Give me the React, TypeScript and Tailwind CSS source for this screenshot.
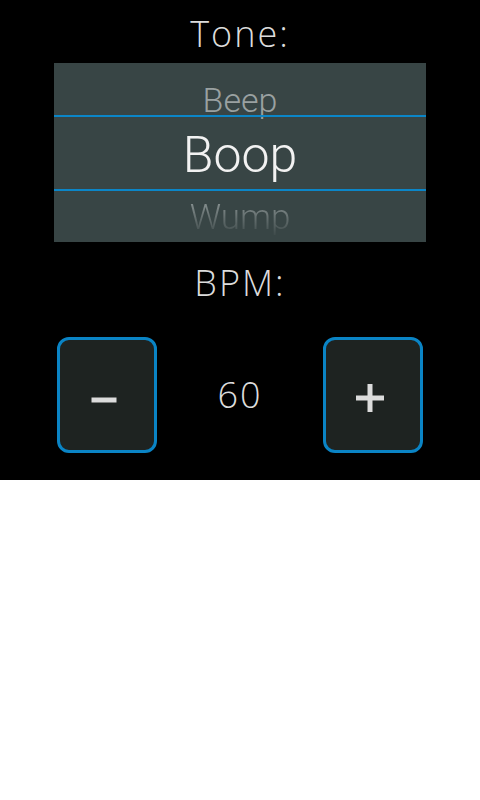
import React from 'react';

const label = "font-['Open_Sans',sans-serif] font-[350] text-[36px] leading-none text-[#dcdcdc] tracking-[2px]";

function StepButton({ kind }: { kind: 'minus' | 'plus' }) {
  return (
    <button className="w-[100px] h-[116px] rounded-[12px] border-[3px] border-[#0a84c5] bg-[#1e2321] flex items-center justify-center">
      {kind === 'minus' ? (
        <svg width="26" height="26" viewBox="0 0 26 26" className="mt-[10px] mr-[6px]">
          <rect x="0.5" y="10.5" width="25" height="5" fill="#dcdcdc" />
        </svg>
      ) : (
        <svg width="28" height="28" viewBox="0 0 28 28" className="mt-[6px] mr-[6px]">
          <rect x="0" y="11.5" width="28" height="5" fill="#dcdcdc" />
          <rect x="11.5" y="0" width="5" height="28" fill="#dcdcdc" />
        </svg>
      )}
    </button>
  );
}

function App() {
  return (
    <div className="w-[480px] min-h-[800px] bg-white">
      <div className="h-[480px] bg-black flex flex-col items-center pt-[16px]">
        <div className={label}>Tone:</div>

        {/* tone picker */}
        <div className="relative mt-[11px] w-[372px] h-[179px] bg-[#384545] overflow-hidden flex flex-col items-center font-['Roboto',sans-serif] font-light">
          <div className="mt-[20px] text-[34px] leading-none text-[#9aa1a1]">Beep</div>
          <div className="mt-[13px] text-[50px] leading-none text-[#f2f2f2]">Boop</div>
          <div className="mt-[20px] text-[35px] leading-none text-transparent bg-clip-text bg-gradient-to-b from-[#8c9595] to-[#3f4b4b]">Wump</div>
          <div className="absolute left-0 right-0 top-[52px] h-[2px] bg-[#0b86c8]" />
          <div className="absolute left-0 right-0 top-[126px] h-[2px] bg-[#0b86c8]" />
        </div>

        <div className={label + ' mt-[23px]'}>BPM:</div>

        <div className="mt-[36px] w-[367px] flex items-center justify-between">
          <StepButton kind="minus" />
          <div className={label}>60</div>
          <StepButton kind="plus" />
        </div>
      </div>
    </div>
  );
}

export default App;
